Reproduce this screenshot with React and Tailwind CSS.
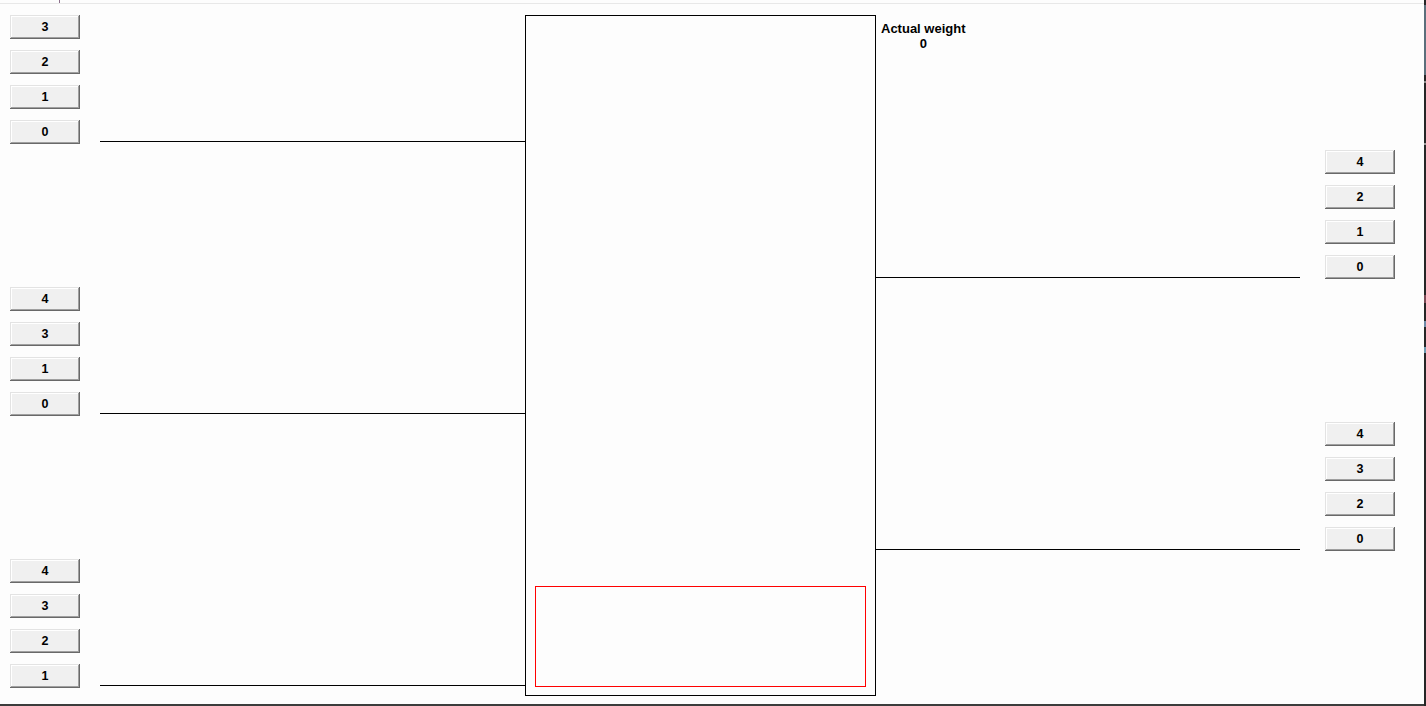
import React from "react";

const font = { fontFamily: '"Liberation Sans", Arial, sans-serif' };

function Btn({ label }) {
  return (
    <div className="w-[70px] h-[24px] flex items-center justify-center bg-[#f0f0f0] text-[12.5px] font-bold text-black leading-none shadow-[inset_-1px_-1px_0_#696969,inset_1px_1px_0_#e3e3e3,inset_-2px_-2px_0_#a0a0a0,inset_2px_2px_0_#ffffff]">
      {label}
    </div>
  );
}

function LeftGroup({ labels, last }) {
  return (
    <div className={`flex items-start ${last ? "" : "h-[272px]"}`}>
      <div className="w-[100px] pl-[10px] flex flex-col gap-[11px]">
        {labels.map((l, i) => (
          <Btn key={i} label={l} />
        ))}
      </div>
      <div className="flex-1 h-px bg-black mt-[126px]" />
    </div>
  );
}

function RightGroup({ labels }) {
  return (
    <div className="flex items-start h-[272px]">
      <div className="flex-1 h-px bg-black mt-[127px]" />
      <div className="w-[25px]" />
      <div className="w-[70px] flex flex-col gap-[11px]">
        {labels.map((l, i) => (
          <Btn key={i} label={l} />
        ))}
      </div>
      <div className="w-[29px]" />
    </div>
  );
}

export default function App() {
  return (
    <div className="w-[1426px] h-[706px] flex bg-[#fdfdfd] overflow-hidden" style={font}>
      <div className="flex-1 flex flex-col">
        <div className="h-[3px] flex">
          <div className="w-[59px]" />
          <div className="w-px h-[3px] bg-[#8c6f8c]" />
        </div>
        <div className="h-px bg-[#e8e8e8]" />
        <div className="flex-1 flex pt-[11px]">
          <div className="w-[525px] flex flex-col">
            <LeftGroup labels={["3", "2", "1", "0"]} />
            <LeftGroup labels={["4", "3", "1", "0"]} />
            <LeftGroup labels={["4", "3", "2", "1"]} last />
          </div>
          <div className="w-[351px] h-[681px] border border-black flex flex-col justify-end pl-[9px] pr-[9px] pb-[8px]">
            <div className="h-[101px] border border-[#ff0000]" />
          </div>
          <div className="flex-1 flex flex-col">
            <div className="h-[135px] pl-[5px] pt-[1px]">
              <div className="inline-flex flex-col items-center text-[13px] font-bold leading-[15px] text-black">
                <span>Actual weight</span>
                <span>0</span>
              </div>
            </div>
            <RightGroup labels={["4", "2", "1", "0"]} />
            <RightGroup labels={["4", "3", "2", "0"]} />
          </div>
        </div>
        <div className="h-[2px] bg-[#3c3c3c]" />
      </div>
      <div className="w-[2px] flex flex-col bg-[#262626]">
        <div className="h-[5px]" />
        <div className="h-[70px] bg-[#5b6f7c]" />
        <div className="h-[6px]" />
        <div className="h-[2px] bg-[#8a8a8a]" />
        <div className="h-[60px]" />
        <div className="h-[2px] bg-[#9a9a9a]" />
        <div className="h-[150px]" />
        <div className="h-[8px] bg-[#7a4a55]" />
        <div className="h-[18px]" />
        <div className="h-[6px] bg-[#6d8aa8]" />
        <div className="h-[20px]" />
        <div className="h-[6px] bg-[#6d9ab0]" />
      </div>
    </div>
  );
}
